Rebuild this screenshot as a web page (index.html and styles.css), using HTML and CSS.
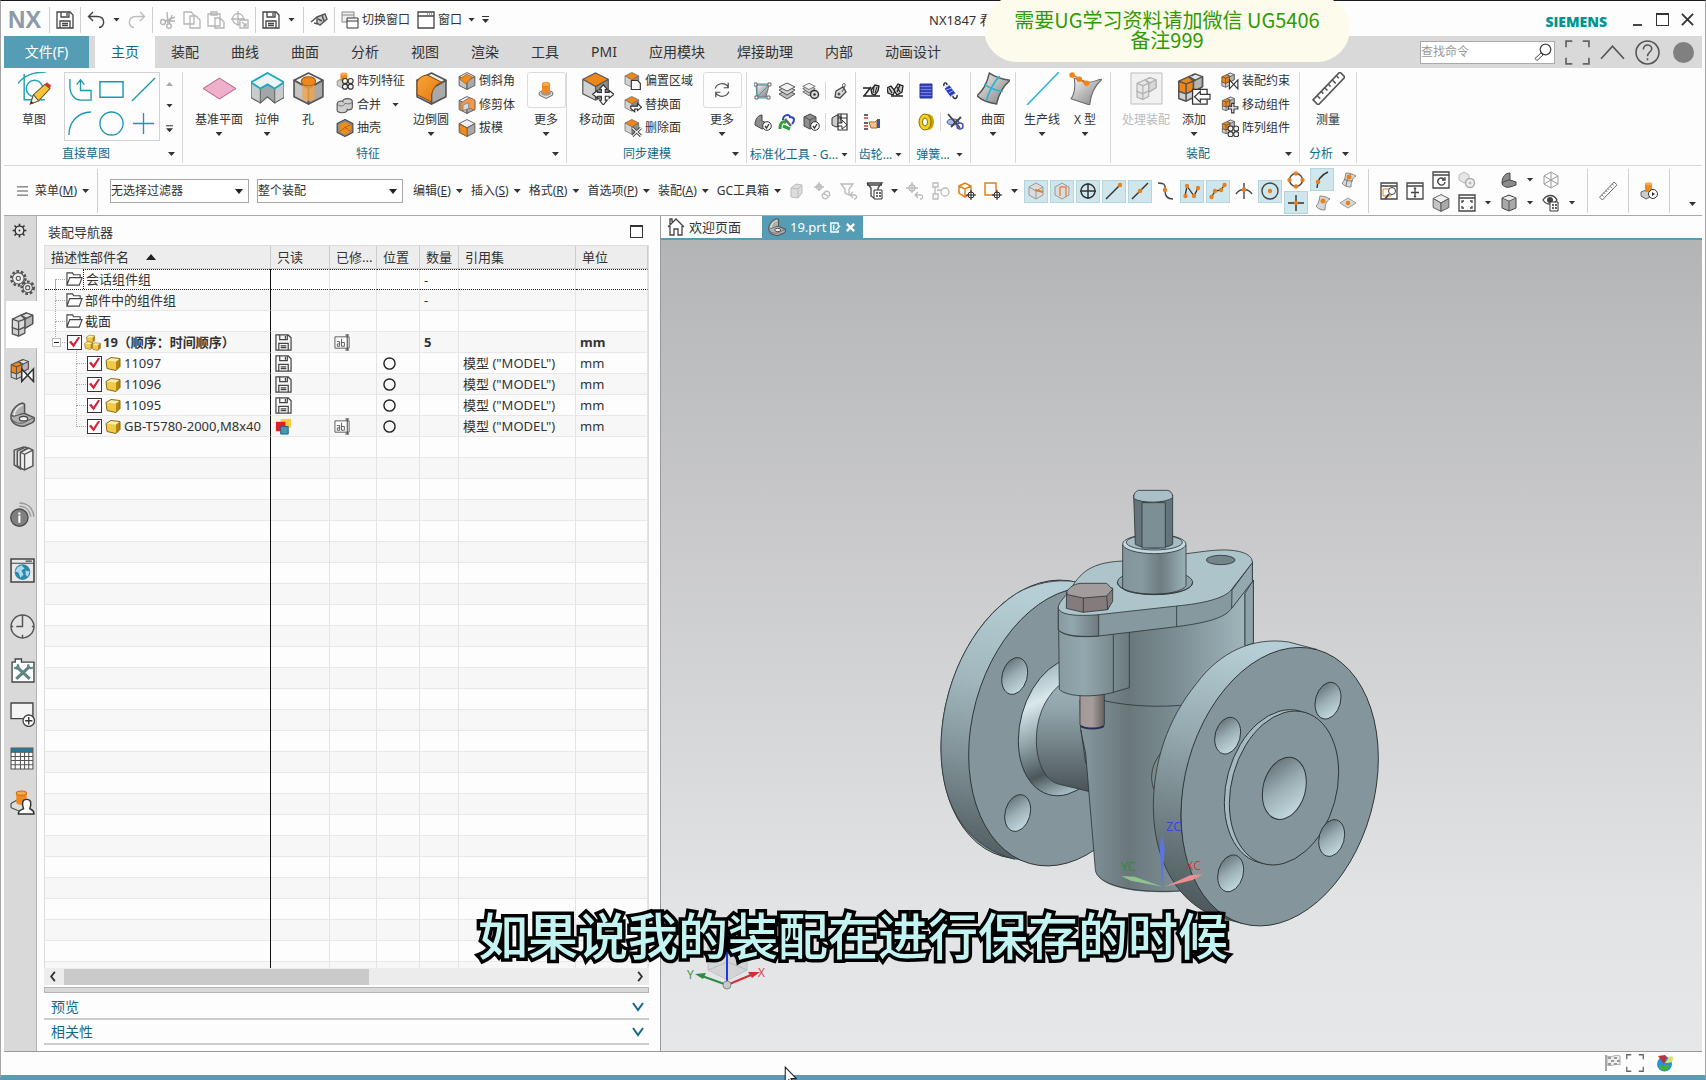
FILE: index.html
```
<!DOCTYPE html>
<html lang="zh-CN">
<head>
  <meta charset="UTF-8">
  <meta name="viewport" content="width=device-width, initial-scale=1.0">
  <title>NX1847</title>
  <link rel="stylesheet" href="styles.css">
</head>
<body>
  <!-- icon sprites -->
  <svg class="sprites" aria-hidden="true">
    <defs>
      <linearGradient id="gSteel" x1="0" y1="0" x2="1" y2="1"><stop offset="0" stop-color="#f2f2f2"/><stop offset="1" stop-color="#7d7d7d"/></linearGradient>
      <linearGradient id="gOrange" x1="0" y1="0" x2="1" y2="1"><stop offset="0" stop-color="#f9a63c"/><stop offset="1" stop-color="#e0760a"/></linearGradient>
    </defs>
    <symbol id="cube" viewBox="0 0 32 32">
      <g stroke="var(--s,#555)" stroke-width="var(--w,1.6)" stroke-linejoin="round">
        <path d="M16 1l14 7-14 8L2 8z" fill="var(--t,#f0f0f0)"/>
        <path d="M2 8l14 8v15L2 24z" fill="var(--l,#c4c4c4)"/>
        <path d="M30 8l-14 8v15l14-7z" fill="var(--r,#a9a9a9)"/>
      </g>
    </symbol>
    <symbol id="stack" viewBox="0 0 32 32">
      <g stroke="#555" stroke-width="1.700" stroke-linejoin="round">
        <path d="M14 4l7-3 8 3v11l-10 6-5-2z" fill="#e4e4e4"/>
        <path d="M29 4v11l-10 6V9z" fill="#b5b5b5"/>
        <path d="M3 19l8 3 8-3v8l-8 4-8-3z" fill="#cfcfcf"/>
        <path d="M3 9l11-5 5 5v10l-8 4-8-3z" fill="var(--t,#dcdcdc)"/>
        <path d="M3 9l8 3 8-3 2-1-7-4M11 12v19M21 1l-4 2" fill="none"/>
      </g>
    </symbol>
    <symbol id="save" viewBox="0 0 18 18"><path d="M1 1h13l3 3v13H1zM5 1v5h8V1M4 17v-7h10v7M6 12.500h6M6 14.500h6M11 2v3" fill="none" stroke="#444" stroke-width="1.300"/></symbol>
    <symbol id="undo" viewBox="0 0 18 18"><path d="M6 1L1.500 5.500 6 10M2 5.500h8c9 0 8 11 2 11" fill="none" stroke="currentColor" stroke-width="1.400"/></symbol>
    <symbol id="cut" viewBox="0 0 18 18"><g fill="none" stroke="#b5b5b5" stroke-width="1.400"><circle cx="4" cy="11" r="2.500"/><circle cx="10" cy="15" r="2.300"/><path d="M6 10l10-4M9 13L8 1M10 13l3-9M7 10l9 0"/></g></symbol>
    <symbol id="copy" viewBox="0 0 18 18"><path d="M1 1h7l3 3v9H1zM7 5h6l4 4v8H7z" fill="#fff" stroke="#b5b5b5" stroke-width="1.300"/></symbol>
    <symbol id="paste" viewBox="0 0 18 18"><path d="M1 3h12v12H1zM4 1h6v3H4zM8 7h5l4 4v6H8z" fill="#fff" stroke="#b5b5b5" stroke-width="1.300"/></symbol>
    <symbol id="repeat" viewBox="0 0 18 18"><g fill="none" stroke="#b5b5b5" stroke-width="1.300"><circle cx="7" cy="8" r="5.500"/><path d="M7 0v15M0 8h14"/><path d="M9 9h8v8H9z" fill="#fff"/><path d="M11 11l4 4m0-3v3h-3"/></g></symbol>
    <symbol id="eraser" viewBox="0 0 18 18"><path d="M7 6l8-3 2 5-7 6-3-2z" fill="#ccc" stroke="#555" stroke-width="1.400"/><path d="M1 11l6-5M4 12l4 1M12 4l2 6M8 8l4 2" stroke="#555" stroke-width="1.600" fill="none"/></symbol>
    <symbol id="switch" viewBox="0 0 18 18"><path d="M1 1h12v10H1zM1 4h12" fill="#eee" stroke="#888"/><path d="M6 7h11v10H6zM6 10h11" fill="#fff" stroke="#333"/></symbol>
    <symbol id="window" viewBox="0 0 18 18"><path d="M1 1h16v16H1zM1 5h16" fill="#fff" stroke="#444" stroke-width="1.300"/><path d="M10 3h5" stroke="#444" stroke-dasharray="1 1"/></symbol>

    <symbol id="sketch" viewBox="0 0 32 32"><g fill="none" stroke="#25a0b5" stroke-width="1.400"><path d="M0 11C6 3 16 0 27 0M6 2v25h20"/><circle cx="16" cy="16" r="8"/></g><path d="M12 31l3-9L26 12l5 4-11 12z" fill="#f5c33c" stroke="#6b5520"/><path d="M26 12l2-2 4 3-1 3z" fill="#d2343c"/><path d="M12 31l3-9 5 6z" fill="#fff3cf" stroke="#555"/><path d="M12 31l1-3 2 2z" fill="#333"/></symbol>
    <symbol id="profile" viewBox="0 0 26 26"><path d="M2 2v8c0 8 5 14 11 14h11V14H13V4M9 8l4-5 4 5" fill="none" stroke="#1d97b0" stroke-width="1.400"/></symbol>
    <symbol id="rect" viewBox="0 0 26 26"><path d="M1 5h24v16H1z" fill="none" stroke="#1d97b0" stroke-width="1.500"/></symbol>
    <symbol id="line" viewBox="0 0 26 26"><path d="M1 25L25 1" stroke="#1d97b0" stroke-width="1.400"/></symbol>
    <symbol id="arc" viewBox="0 0 26 26"><path d="M1 25C1 12 10 1 24 1" fill="none" stroke="#1d97b0" stroke-width="1.400"/></symbol>
    <symbol id="circle" viewBox="0 0 26 26"><circle cx="13" cy="13" r="12" fill="none" stroke="#1d97b0" stroke-width="1.400"/></symbol>
    <symbol id="plus" viewBox="0 0 26 26"><path d="M13 2v22M2 13h22" stroke="#1d97b0" stroke-width="1.400"/></symbol>

    <symbol id="plane" viewBox="0 0 32 32"><path d="M16 6l16 10-16 10L0 16z" fill="#efb0cb" stroke="#c0668f"/></symbol>
    <symbol id="extrude" viewBox="0 0 32 32"><path d="M0 10l16-9 16 9v15l-9 5-7-6-7 6-9-5z" fill="#c9cccd" stroke="#555"/><path d="M9 16l7-4 7 4v14l-7-6-7 6z" fill="#a3a6a8" stroke="#666"/><path d="M0 10l16-9 16 9-9 6-7-4-7 4z" fill="#eef3f4" stroke="#1fa7c4" stroke-width="1.800"/></symbol>
    <symbol id="hole" viewBox="0 0 32 32"><use href="#cube"/><path d="M10 12v13c0 4 12 4 12 0V12" fill="#f3a54a" opacity=".8"/><ellipse cx="16" cy="9" rx="7" ry="4.500" fill="#f0871a" stroke="#a5590b"/></symbol>
    <symbol id="blend" viewBox="0 0 32 32"><use href="#cube"/><path d="M2 22V10C3 6 8 3 12 3l14 7c-6 2-9 7-10 12v7z" fill="url(#gOrange)" stroke="#8a4c0c"/></symbol>
    <symbol id="more" viewBox="0 0 32 32"><path d="M4 20l12-6 12 6v5l-12 6-12-6z" fill="#ddd" stroke="#555" stroke-width="1.500"/><ellipse cx="16" cy="21" rx="9" ry="5" fill="#999"/><path d="M9 6v13c0 4 14 4 14 0V6z" fill="#f08a20"/><ellipse cx="16" cy="6" rx="7" ry="4" fill="#f9a94e" stroke="#c9700f"/></symbol>
    <symbol id="pattern" viewBox="0 0 32 32"><path d="M2 16l10-5 8 4v10l-8 4-10-5z" fill="#ccc" stroke="#666"/><path d="M8 3v13h12V3z" fill="#ef8a20"/><ellipse cx="14" cy="3.500" rx="6" ry="2.500" fill="#f9a94e"/><g fill="#f4f4f4" stroke="#333" stroke-width="2"><circle cx="16" cy="16" r="4.500"/><circle cx="26" cy="16" r="4.500"/><circle cx="16" cy="26" r="4.500"/><circle cx="26" cy="26" r="4.500"/></g></symbol>
    <symbol id="unite" viewBox="0 0 32 32"><path d="M2 14c0-5 8-6 10-4 0-7 17-7 17 0v10c0 5-8 5-9 4 0 8-18 7-18 1z" fill="#cfcfcf" stroke="#555" stroke-width="2"/><path d="M2 14c2 5 13 5 14-1 7 2 12 1 13-3" fill="none" stroke="#666" stroke-width="1.500"/></symbol>
    <symbol id="shell" viewBox="0 0 32 32"><path d="M16 1l14 7v16l-14 7L2 24V8z" fill="#8a8a8a" stroke="#444" stroke-width="2"/><path d="M16 5l10 5v12l-10 6-10-6V10z" fill="#f08c1e"/><path d="M16 15l10-5M16 15L6 22M16 15l10 7" stroke="#a75c08" stroke-width="1.500"/></symbol>
    <symbol id="trim" viewBox="0 0 32 32"><use href="#cube"/><path d="M5 12l16-9 9 4v18l-8-3-17 4z" fill="#ee9a55" stroke="#9a6231" stroke-width="1.500"/><path d="M9 16l10-4v10l-10 4z" fill="#d9d9d9" stroke="#666"/></symbol>
    <symbol id="chamfer" viewBox="0 0 32 32"><use href="#cube"/><path d="M2 12l14-8 10 5-12 12z" fill="#f08c1e" stroke="#8a4c0c"/></symbol>
    <symbol id="draft" viewBox="0 0 32 32"><use href="#cube"/><path d="M2 9l14 7v15L4 24z" fill="#f08c1e" stroke="#8a4c0c"/></symbol>
    <symbol id="cubeO" viewBox="0 0 32 32"><path d="M16 1l14 7-14 8L2 8z" fill="#ef8718"/><path d="M2 8l14 8v15L2 24z" fill="#d2d2d2"/><path d="M30 8l-14 8v15l14-7z" fill="#8c8c8c"/><path d="M16 1l14 7v16l-14 7L2 24V8zM2 8l14 8 14-8M16 16v15" fill="none" stroke="#555" stroke-width="1.300"/></symbol>
    <symbol id="moveface" viewBox="0 0 34 34"><use href="#cubeO" width="30" height="30"/><path d="M23 13l4 5h-2v3h4v-2l5 4-5 4v-2h-4v4h2l-4 5-4-5h2v-4h-4v2l-5-4 5-4v2h4v-3h-2z" fill="#fff" stroke="#333" stroke-width="1.200"/></symbol>
    <symbol id="offset" viewBox="0 0 32 32"><use href="#cubeO" width="28" height="28"/><path d="M13 15h11l5 5v11H13z" fill="#fff" stroke="#333" stroke-width="2"/></symbol>
    <symbol id="replace" viewBox="0 0 32 32"><use href="#cubeO" width="28" height="28"/><path d="M12 18h12v-5l7 7-7 6v-3H19v5l-7-6z" fill="#fff" stroke="#333" stroke-width="2"/></symbol>
    <symbol id="delface" viewBox="0 0 32 32"><use href="#cubeO" width="28" height="28"/><path d="M15 16l15 14M30 16L15 30" stroke="#333" stroke-width="5"/><path d="M15 16l15 14M30 16L15 30" stroke="#fff" stroke-width="2"/></symbol>
    <symbol id="cycle" viewBox="0 0 32 32"><path d="M4 13C7 3 22 2 27 11M27 3v9h-8M28 19c-3 10-18 11-23 2M5 29v-9h8" fill="none" stroke="#4b4b4b" stroke-width="2.200"/></symbol>

    <symbol id="stdA" viewBox="0 0 18 18"><path d="M2 3h13l-3 12H3z" fill="url(#gSteel)" stroke="#777"/><path d="M1 2h16M2 16L15 3M3 2v14h12" stroke="#3a9aa8" fill="none"/><path d="M0 1h3v3H0zM14 1h3v3h-3zM1 14h3v3H1zM13 14h3v3h-3z" fill="#fff" stroke="#666"/></symbol>
    <symbol id="layers" viewBox="0 0 18 18"><path d="M9 8l8 4-8 5-8-5z" fill="#bbb" stroke="#555"/><path d="M9 4l8 4-8 5-8-5z" fill="#d2d2d2" stroke="#555"/><path d="M9 1l8 4-8 4-8-4z" fill="#f2f2f2" stroke="#555"/></symbol>
    <symbol id="layerGear" viewBox="0 0 18 18"><use href="#layers" width="14" height="15"/><circle cx="12.500" cy="12.500" r="4" fill="#ddd" stroke="#333" stroke-width="1.500"/><circle cx="12.500" cy="12.500" r="1.300" fill="#333"/></symbol>
    <symbol id="tag" viewBox="0 0 18 18"><path d="M5 9l7-4 3 5-6 6-5-1z" fill="#ddd" stroke="#444" stroke-width="1.300"/><path d="M12 5c-2-4 3-5 2-1l-3 6" fill="none" stroke="#555"/><circle cx="8" cy="12" r="1.500" fill="#555"/></symbol>
    <symbol id="partOk" viewBox="0 0 18 18"><path d="M1 12C1 5 5 2 8 2v6l5 2v4l-5 2z" fill="#8d8d8d" stroke="#444"/><circle cx="13" cy="13" r="4.300" fill="#fff" stroke="#333"/><path d="M11 13l1.500 2 2.500-4" fill="none" stroke="#333" stroke-width="1.300"/></symbol>
    <symbol id="boxOk" viewBox="0 0 18 18"><path d="M2 4l6-3 6 3v9l-6 3-6-3z" fill="#8d8d8d" stroke="#444"/><path d="M2 4l6 3 6-3M8 7v9" stroke="#555" fill="none"/><circle cx="13" cy="13" r="4.300" fill="#fff" stroke="#333"/><path d="M11 13l1.500 2 2.500-4" fill="none" stroke="#333" stroke-width="1.300"/></symbol>
    <symbol id="springy" viewBox="0 0 18 18"><path d="M2 16c0-8 4-8 6-6M5 13l7 3" fill="none" stroke="#25a334" stroke-width="3"/><path d="M5 7c0-6 7-6 7-3 5 0 5 4 2 7" fill="none" stroke="#2b45c8" stroke-width="2"/><path d="M7 6l6 7" stroke="#666" stroke-width="2.500"/></symbol>
    <symbol id="export" viewBox="0 0 18 18"><path d="M1 5l5-3 4 2v8l-5 2-4-2z" fill="#ccc" stroke="#333"/><path d="M7 1h9v16H7zM7 5h9M10 1v6" fill="none" stroke="#333" stroke-width="1.200"/><path d="M7 10h4V7l5 5-5 4v-3H7z" fill="#fff" stroke="#333"/></symbol>
    <symbol id="gearA" viewBox="0 0 18 18"><path d="M0 14h17M1 14L8 5M0 6h8" stroke="#222" stroke-width="1.500"/><path d="M8 8l4-5 4 1-1 5-3 4-3-1z" fill="#ccc" stroke="#222" stroke-width="1.300"/><path d="M11 5l-1 6M14 5l-2 6" stroke="#222"/></symbol>
    <symbol id="gearB" viewBox="0 0 18 18"><path d="M0 6l4-2 4 5-2 4-5-2z" fill="#ccc" stroke="#222" stroke-width="1.300"/><path d="M7 8l4-6 5 2-1 6-5 3z" fill="#ccc" stroke="#222" stroke-width="1.300"/><path d="M2 6l3 5M10 5l3 5M13 3l-3 7M4 14h12" stroke="#222" stroke-width="1.300"/></symbol>
    <symbol id="listHand" viewBox="0 0 18 18"><path d="M1 2h4M1 10h4M1 16h4" stroke="#333" stroke-width="1.600"/><path d="M1 5h4M1 13h4" stroke="#d33" stroke-width="1.300"/><path d="M6 9h6l2-2v8H8z" fill="#f2c48b" stroke="#a26b2f"/><path d="M14 6h3v9h-3z" fill="#3554b8"/></symbol>
    <symbol id="coil" viewBox="0 0 18 18"><path d="M3 2h12v14H3z" fill="#7782e0" stroke="#26348f"/><path d="M3 3h12M3 6h12M3 9h12M3 12h12M3 15h12" stroke="#1f2fa8" stroke-width="1.500"/></symbol>
    <symbol id="coil2" viewBox="0 0 18 18"><path d="M6 5l6 8" stroke="#2a3bc0" stroke-width="6"/><path d="M4 5l5-2M5 8l6-2M8 11l5-3M10 14l5-3" stroke="#aab2f0"/><path d="M3 4c-1-4 3-4 3-1M12 14c0 4 5 3 4-1" stroke="#223" stroke-width="1.400" fill="none"/></symbol>
    <symbol id="disc" viewBox="0 0 18 18"><ellipse cx="11" cy="9" rx="6" ry="8" fill="#c9a200"/><ellipse cx="8" cy="9" rx="6" ry="8" fill="#f2d21c" stroke="#8a7000"/><ellipse cx="8" cy="9" rx="2.500" ry="4" fill="#fff" stroke="#8a7000"/></symbol>
    <symbol id="snip" viewBox="0 0 18 18"><ellipse cx="7" cy="9" rx="6" ry="3" fill="#aab4ee" stroke="#4552b8"/><path d="M2 1l12 14M15 4L5 14" stroke="#444" stroke-width="1.800"/><circle cx="14" cy="13" r="3" fill="none" stroke="#4552b8" stroke-width="1.500"/></symbol>

    <symbol id="surface" viewBox="0 0 32 32"><path d="M12 1c6 4 13 6 20 7-7 6-11 13-13 23C12 30 5 28 0 23 6 18 10 10 12 1z" fill="url(#gSteel)" stroke="#555" stroke-width="1.400"/><path d="M22 4C16 10 12 18 9 28M7 12c6 4 12 6 18 7" fill="none" stroke="#27b4d2" stroke-width="1.500"/></symbol>
    <symbol id="bigline" viewBox="0 0 32 32"><path d="M1 32L32 0" stroke="#27b4d2" stroke-width="1.500"/></symbol>
    <symbol id="xform" viewBox="0 0 32 32"><path d="M5 6l14 4c5 0 9-3 13-3-7 6-11 15-12 25L2 26C6 20 6 12 5 6z" fill="url(#gSteel)" stroke="#666"/><path d="M3 2l13 9" stroke="#e2761b" stroke-width="1.500"/><g fill="#ee8320"><circle cx="3" cy="3" r="2.700"/><circle cx="10" cy="7" r="2.700"/><circle cx="17" cy="11" r="2.700"/></g></symbol>
    <symbol id="procasm" viewBox="0 0 34 34"><path d="M1 1h32v32H1z" fill="#f1f1f1" stroke="#bdbdbd"/><use href="#stack" x="5" y="5" width="24" height="24" opacity=".4"/></symbol>
    <symbol id="addcomp" viewBox="0 0 34 34"><g class="o"><use href="#stack" x="-2" y="0" width="30" height="32"/></g><path d="M15 18h15v15H15z" fill="#fff" stroke="#333" stroke-width="1.300"/><path d="M33 23H23v-3l-6 5.500 6 5.500v-3h10z" fill="#fff" stroke="#333" stroke-width="1.200"/></symbol>
    <symbol id="constrain" viewBox="0 0 32 32"><g class="o"><use href="#stack" x="-1" width="27" height="29"/></g><path d="M15 14v16L30 14v16z" fill="#fff" stroke="#333" stroke-width="2"/></symbol>
    <symbol id="movecomp" viewBox="0 0 32 32"><g class="o"><use href="#stack" width="26" height="28"/></g><path d="M21 12v19M12 21h19" stroke="#333" stroke-width="6"/><path d="M21 14v15M14 21h15" stroke="#fff" stroke-width="2"/></symbol>
    <symbol id="patcomp" viewBox="0 0 32 32"><g class="o"><use href="#stack" width="26" height="28"/></g><g fill="#f4f4f4" stroke="#333" stroke-width="2"><circle cx="17" cy="17" r="4.500"/><circle cx="27" cy="17" r="4.500"/><circle cx="17" cy="27" r="4.500"/><circle cx="27" cy="27" r="4.500"/></g></symbol>
    <symbol id="ruler" viewBox="0 0 32 32"><path d="M1 27L27 0l5 5L6 32z" fill="#fff" stroke="#555" stroke-width="1.600"/><path d="M5 23l3 3M9 19l2 2M12 15l3 3M16 12l2 2M20 8l3 3M24 4l2 2" stroke="#555" stroke-width="1.500"/></symbol>

    <symbol id="ghost" viewBox="0 0 18 18"><g fill="#ddd" stroke="#bbb"><path d="M3 6l5-4 6 1v8l-4 5-7-1z"/><path d="M3 6l7 1 4-4M10 7v9" fill="none"/></g></symbol>
    <symbol id="ghost2" viewBox="0 0 18 18"><g fill="none" stroke="#bbb" stroke-width="1.300"><path d="M5 0v9M0 5h10"/><circle cx="5" cy="5" r="2.500"/><path d="M8 13l4-4 3 1 1 3-4 4-3-1zM9 11l5 3"/></g></symbol>
    <symbol id="filterU" viewBox="0 0 18 18"><path d="M1 2h12L9 7v6l-4-2V7zM11 13h3c4 0 3 4 0 4M13 10l-3 3 3 3" fill="none" stroke="#bbb" stroke-width="1.300"/></symbol>
    <symbol id="filter" viewBox="0 0 18 18"><path d="M1 1h15l-4 5v3M1 1l4 5v8l3 2M1 3h15" fill="none" stroke="#444" stroke-width="1.300"/><path d="M8 8h8v9H8z" fill="#fff" stroke="#333"/><path d="M10 11h2M10 14h2M13 11h2M13 14h2" stroke="#333" stroke-width="1.500"/></symbol>
    <symbol id="pickU" viewBox="0 0 18 18"><g fill="none" stroke="#bbb" stroke-width="1.300"><path d="M6 0v11M0 6h12"/><circle cx="6" cy="6" r="3"/><path d="M10 13h4c4 0 3 4 0 4M12 10l-3 3 3 3"/></g></symbol>
    <symbol id="treeIc" viewBox="0 0 18 18"><g fill="none" stroke="#bbb" stroke-width="1.300"><path d="M1 1h5v4H1zM1 12h5v5H1zM3 5v7M5 8h4"/><circle cx="13" cy="10" r="4"/></g></symbol>
    <symbol id="pickBody" viewBox="0 0 18 18"><path d="M1 4l6-3 6 3v7l-6 4-6-4zM1 4l6 3 6-3M7 7v8" fill="none" stroke="#e0801c" stroke-width="1.500"/><circle cx="13" cy="13" r="3" fill="#fff" stroke="#222"/><path d="M13 8v10M8 13h10" stroke="#222"/></symbol>
    <symbol id="pickRect" viewBox="0 0 18 18"><path d="M1 1h11v12H1z" fill="none" stroke="#e0801c" stroke-width="1.500"/><circle cx="13" cy="13" r="3" fill="#fff" stroke="#222"/><path d="M13 8v10M8 13h10" stroke="#222"/></symbol>
    <symbol id="bodyFace" viewBox="0 0 18 18"><path d="M9 1l7 4v8l-7 4-7-4V5z" fill="#dcdcdc" stroke="#999"/><path d="M2 5l7 4 7-4M9 9v8" fill="none" stroke="#999"/><path d="M8 8l8 2" stroke="#e0801c" stroke-width="2"/></symbol>
    <symbol id="bodyEdge" viewBox="0 0 18 18"><path d="M9 1l7 4v8l-7 4-7-4V5z" fill="#dcdcdc" stroke="#999"/><path d="M7 5h6v10M7 5v9" fill="none" stroke="#d98a54" stroke-width="1.500"/></symbol>
    <symbol id="target" viewBox="0 0 18 18"><circle cx="9" cy="9" r="7" fill="none" stroke="#333" stroke-width="1.500"/><path d="M9 1v6M9 11v6M1 9h6M11 9h6M7 9h4M9 7v4" stroke="#333" stroke-width="1.500"/></symbol>
    <symbol id="endpt" viewBox="0 0 18 18"><path d="M1 17L15 3" stroke="#333" stroke-width="1.500"/><circle cx="15" cy="3" r="2.200" fill="#e8801c"/></symbol>
    <symbol id="midpt" viewBox="0 0 18 18"><path d="M1 17L17 1" stroke="#333" stroke-width="1.500"/><circle cx="9" cy="9" r="2.300" fill="#e8801c"/></symbol>
    <symbol id="scurve" viewBox="0 0 18 18"><path d="M1 1c9 0 7 4 7 8s2 8 8 8" fill="none" stroke="#444" stroke-width="1.400"/><circle cx="8" cy="8" r="2.200" fill="#e8801c"/></symbol>
    <symbol id="poly" viewBox="0 0 18 18"><path d="M2 14L4 4l7 10 4-8" fill="none" stroke="#333" stroke-width="1.300"/><g fill="#e8801c"><circle cx="2.500" cy="14" r="2.200"/><circle cx="4" cy="4" r="2.200"/><circle cx="11" cy="14" r="2.200"/><circle cx="15" cy="6" r="2.200"/></g></symbol>
    <symbol id="spline" viewBox="0 0 18 18"><path d="M2 16l4-7 6-1 4-6" fill="none" stroke="#333" stroke-width="1.300"/><g fill="#e8801c"><circle cx="2.500" cy="15" r="2.200"/><circle cx="6" cy="9" r="2.200"/><circle cx="12" cy="8" r="2.200"/><circle cx="15.500" cy="3" r="2.200"/></g></symbol>
    <symbol id="cross" viewBox="0 0 18 18"><path d="M9 1v16M1 12c4-6 12-6 16 0" fill="none" stroke="#444" stroke-width="1.400"/><circle cx="9" cy="7.500" r="2.200" fill="#e8801c"/></symbol>
    <symbol id="center" viewBox="0 0 18 18"><circle cx="9" cy="9" r="8" fill="none" stroke="#444" stroke-width="1.400"/><circle cx="9" cy="9" r="2.200" fill="#e8801c"/></symbol>
    <symbol id="quad" viewBox="0 0 18 18"><circle cx="9" cy="9" r="6.500" fill="none" stroke="#444" stroke-width="1.400"/><g fill="#e8801c"><circle cx="9" cy="2.500" r="2.200"/><circle cx="9" cy="15.500" r="2.200"/><circle cx="2.500" cy="9" r="2.200"/><circle cx="15.500" cy="9" r="2.200"/></g></symbol>
    <symbol id="point" viewBox="0 0 18 18"><path d="M9 1v16M1 9h16" stroke="#333" stroke-width="1.400"/><circle cx="9" cy="9" r="2.200" fill="#e8801c"/></symbol>
    <symbol id="oncurve" viewBox="0 0 18 18"><path d="M4 17C4 10 8 4 15 1" fill="none" stroke="#333" stroke-width="1.400"/><circle cx="5" cy="11" r="2.300" fill="#e8801c"/></symbol>
    <symbol id="onsurf" viewBox="0 0 18 18"><path d="M7 2c3 0 7 1 10 3-4 2-5 6-5 11-4 0-7-1-9-4C6 10 6 6 7 2z" fill="#d8d8d8" stroke="#888"/><circle cx="10" cy="7" r="2.500" fill="#e8801c"/></symbol>
    <symbol id="gridsurf" viewBox="0 0 18 18"><path d="M7 2c3 0 7 1 10 3-4 2-5 6-5 11-4 0-7-1-9-4C6 10 6 6 7 2z" fill="#d8d8d8" stroke="#888"/><path d="M12 3C8 6 8 10 7 15M5 8c3 2 6 2 9 2" fill="none" stroke="#777"/><circle cx="10" cy="6" r="2.500" fill="#e8801c"/></symbol>
    <symbol id="onface" viewBox="0 0 18 18"><path d="M9 4l8 5-8 5-8-5z" fill="#d8d8d8" stroke="#999"/><circle cx="9" cy="9" r="2.300" fill="#e8801c"/></symbol>
    <symbol id="fitwin" viewBox="0 0 18 18"><path d="M1 1h16v16H1zM1 4h16" fill="#fff" stroke="#444" stroke-width="1.300"/><path d="M3 7h8v7H3z" fill="none" stroke="#e8801c"/><circle cx="12" cy="9" r="3.500" fill="#fff" stroke="#444"/><path d="M9 12l-4 5" stroke="#444" stroke-width="2"/></symbol>
    <symbol id="panwin" viewBox="0 0 18 18"><path d="M1 1h16v16H1zM1 4h16M9 6v9M5 10.500h8M8 7l1-1 1 1M8 14l1 1 1-1" fill="none" stroke="#444" stroke-width="1.300"/></symbol>
    <symbol id="rotwin" viewBox="0 0 18 18"><path d="M1 1h16v16H1zM1 4h16M12 8c-5-3-8 2-5 5 2 2 6 1 6-2M13 6v3h-3" fill="none" stroke="#444" stroke-width="1.300"/></symbol>
    <symbol id="fullwin" viewBox="0 0 18 18"><path d="M1 1h16v16H1zM1 4h16M4 9V7h2M12 7h2v2M4 12v2h2M12 14h2v-2" fill="none" stroke="#444" stroke-width="1.300"/></symbol>
    <symbol id="ghostgear" viewBox="0 0 18 18"><path d="M1 4l5-3 5 3v5l-5 3-5-3z" fill="#e6e6e6" stroke="#bbb"/><circle cx="12" cy="12" r="4.500" fill="#eee" stroke="#aaa" stroke-width="1.500"/><circle cx="12" cy="12" r="1.500" fill="#bbb"/></symbol>
    <symbol id="section" viewBox="0 0 18 18"><path d="M2 12C2 5 6 2 10 2v7l6 2v3l-6 2c-4 1-8-1-8-4z" fill="#8b8b8b" stroke="#444"/><path d="M2 12c3-2 6-3 8-3" fill="none" stroke="#444"/></symbol>
    <symbol id="shade" viewBox="0 0 18 18"><path d="M2 4l7-3 7 3v10l-7 3-7-3z" fill="#a9a9a9" stroke="#444"/><path d="M2 4l7 3 7-3M9 7v10" fill="none" stroke="#555"/><path d="M3 4l6-2 6 2-6 2.500z" fill="#eee"/></symbol>
    <symbol id="wire" viewBox="0 0 18 18"><path d="M9 1l7 4v8l-7 4-7-4V5zM2 5l7 4 7-4M9 9v8M9 1v8M2 13l7-4 7 4" fill="none" stroke="#999"/></symbol>
    <symbol id="eyelist" viewBox="0 0 18 18"><path d="M1 6c4-6 11-6 14 0-3 5-10 6-14 0z" fill="#fff" stroke="#444" stroke-width="1.300"/><circle cx="8" cy="6" r="3" fill="#444"/><path d="M8 8h8v9H8z" fill="#fff" stroke="#333"/><path d="M10 11h2M10 14h2M13 11h2M13 14h2" stroke="#333" stroke-width="1.500"/></symbol>
    <symbol id="play" viewBox="0 0 18 18"><path d="M1 10l5-2 6 3v3l-6 3-5-3z" fill="#ccc" stroke="#666"/><path d="M5 1h7v9H5z" fill="#ef8a20"/><ellipse cx="8.500" cy="1.800" rx="3.500" ry="1.500" fill="#f9a94e"/><circle cx="13" cy="12" r="4.500" fill="#fff" stroke="#333"/><path d="M12 10l3 2-3 2z" fill="#333"/></symbol>

    <symbol id="gear" viewBox="0 0 24 24"><path d="M12 1v4M12 19v4M1 12h4M19 12h4M4 4l3 3M17 17l3 3M20 4l-3 3M4 20l3-3" stroke="#333" stroke-width="2.500"/><circle cx="12" cy="12" r="7" fill="#e4e4e4" stroke="#333" stroke-width="2.200"/><circle cx="12" cy="12" r="1.500" fill="#333"/></symbol>
    <symbol id="gears" viewBox="0 0 24 24"><g fill="#ececec"><circle cx="8" cy="8" r="6.500" stroke="#555" stroke-width="3" stroke-dasharray="2.400 1.700"/><circle cx="8" cy="8" r="5.500" stroke="#555"/><circle cx="8" cy="8" r="2" stroke="#555"/><circle cx="17" cy="17" r="5.500" stroke="#555" stroke-width="3" stroke-dasharray="2.400 1.700"/><circle cx="17" cy="17" r="4.500" stroke="#555"/><circle cx="17" cy="17" r="2" stroke="#555"/></g></symbol>
    <symbol id="bracket" viewBox="0 0 24 24"><path d="M1 12C2 7 7 2 12 1l2 1v9l9 4c1 2 0 4-2 5l-7 3C8 24 2 21 1 16z" fill="#b0b0b0" stroke="#555" stroke-width="1.400"/><path d="M1 12c3 4 7-1 13-1" fill="#d8d8d8" stroke="#555" stroke-width="1.200"/><path d="M4 13C4 8 8 4 12 3" fill="none" stroke="#eee" stroke-width="1.200"/><ellipse cx="13" cy="16" rx="4" ry="2.200" fill="#f2f2f2" stroke="#444" stroke-width="1.200"/><path d="M1 16c3 4 8 5 12 4l10-5" fill="none" stroke="#666"/></symbol>
    <symbol id="books" viewBox="0 0 24 24"><path d="M4 4l9-3 2 1-5 3v17l-6-4z" fill="#d8d8d8" stroke="#555" stroke-width="1.400"/><path d="M7 5l8-4 2 1-5 3v17l-5-3z" fill="#e2e2e2" stroke="#555" stroke-width="1.400"/><path d="M10 6l8-4 4 2v15l-8 4-4-2z" fill="#f0f0f0" stroke="#555" stroke-width="1.400"/><path d="M10 6l4 2 8-4M14 8v15" fill="none" stroke="#555" stroke-width="1.300"/></symbol>
    <symbol id="info" viewBox="0 0 24 24"><circle cx="9" cy="15" r="8.300" fill="#7f7f7f" stroke="#4b4b4b" stroke-width="1.300"/><path d="M9 13v7M9 10v2" stroke="#fff" stroke-width="2"/><path d="M9 4c6 0 10 4 11 10M9 1c8 0 13 5 14 13" fill="none" stroke="#9b9b9b" stroke-width="1.500"/></symbol>
    <symbol id="web" viewBox="0 0 24 24"><path d="M1 1h22v22H1z" fill="#e9e9e9" stroke="#444" stroke-width="1.500"/><path d="M1 5h22M15 3h6" stroke="#444"/><circle cx="12" cy="13.500" r="7.500" fill="#2f86a8"/><path d="M7 9l4-2 3 3-3 2 2 4-3 3-2-5-3-1zM15 12l4 1-2 5-2-2z" fill="#a8dcec"/></symbol>
    <symbol id="clock" viewBox="0 0 24 24"><circle cx="12" cy="12" r="11" fill="#e4e4e4" stroke="#555" stroke-width="1.400"/><path d="M12 1v11H6M12 20v3M1 12h2M21 12h2" fill="none" stroke="#555" stroke-width="1.400"/></symbol>
    <symbol id="tools" viewBox="0 0 24 24"><path d="M2 4h3V1h6v3h12v19H2z" fill="#fff" stroke="#444" stroke-width="1.300"/><path d="M6 8l13 12M19 8L6 20" stroke="#5d8587" stroke-width="3"/><path d="M4 9c4 3 5-1 3-3M18 6c-2 3 1 5 4 3" fill="none" stroke="#5d8587" stroke-width="2"/></symbol>
    <symbol id="addwin" viewBox="0 0 24 24"><path d="M1 1h21v15H1z" fill="#f4f4f4" stroke="#444" stroke-width="1.300"/><circle cx="18" cy="18" r="5.500" fill="#fff" stroke="#444" stroke-width="1.300"/><path d="M18 14.500v7M14.500 18h7" stroke="#333" stroke-width="1.300"/></symbol>
    <symbol id="sheet" viewBox="0 0 24 24"><path d="M1 2h21v20H1z" fill="#fff"/><path d="M1 2h21v4H1z" fill="#23799a"/><path d="M1 2h21v20H1zM1 6h21M1 10h21M1 14h21M1 18h21M5 6v16M10 6v16M14 6v16M18 6v16" fill="none" stroke="#555"/></symbol>
    <symbol id="role" viewBox="0 0 24 24"><path d="M1 13l7-4 10 3v6l-7 3-10-4z" fill="#ddd" stroke="#444"/><path d="M6 3v9c0 3 10 3 10 0V3z" fill="#ef8a20"/><ellipse cx="11" cy="3" rx="5" ry="2" fill="#f9a94e" stroke="#c9700f"/><path d="M8 23c0-4 3-4 5-5-2-6-1-9 3-9s5 3 3 9c2 1 4 1 4 5z" fill="#fff" stroke="#333" stroke-width="1.400"/></symbol>

    <symbol id="folder" viewBox="0 0 18 16"><path d="M1 14V1h6l1 2h7v3M1 14L4 6h13l-3 8z" fill="#fff" stroke="#444" stroke-width="1.200"/></symbol>
    <symbol id="partY" viewBox="0 0 16 16"><path d="M1 5l5-3 9 1-4 3z" fill="#fdeeb0"/><path d="M1 5l10 1v9l-9-2z" fill="#f0cb4a"/><path d="M11 6l4-3v8l-4 4z" fill="#b8860b"/><path d="M1 5l5-3 9 1v8l-4 4-9-2z" fill="none" stroke="#8a6a12"/></symbol>
    <symbol id="asmY" viewBox="0 0 18 18"><use href="#partY" x="2" width="10" height="10"/><use href="#partY" y="7" width="10" height="10"/><use href="#partY" x="8" y="8" width="10" height="10"/></symbol>
    <symbol id="abI" viewBox="0 0 18 18"><path d="M1 3h15v12H1z" fill="#fff" stroke="#555"/><path d="M14 1v16M12 1h4M12 17h4" stroke="#333" fill="none"/><path d="M3 8h3v5H3.500v-2.500H6M8 5v8h3V9H8" fill="none" stroke="#555"/></symbol>
    <symbol id="clash" viewBox="0 0 18 18"><path d="M6 1h11v9H6z" fill="#f5cf3c"/><path d="M1 4h10v10H1z" fill="#e01f26"/><path d="M6 9h8v8H6z" fill="#3f9bbd" stroke="#1f6480"/></symbol>
    <symbol id="ring" viewBox="0 0 14 14"><circle cx="7" cy="7" r="6" fill="none" stroke="#222" stroke-width="1.500"/></symbol>
    <symbol id="home" viewBox="0 0 18 18"><path d="M1 9l8-8 8 8M3 8v9h4v-6h4v6h4V8M3 6V1h2v3" fill="#fff" stroke="#444" stroke-width="1.300"/></symbol>
    <symbol id="corners" viewBox="0 0 24 24"><path d="M1 7V1h6M17 1h6v6M23 17v6h-6M7 23H1v-6" fill="none" stroke="#666" stroke-width="1.700"/></symbol>
    <symbol id="chev" viewBox="0 0 24 24"><path d="M1 18L12 6l11 12" fill="none" stroke="#555" stroke-width="1.600"/></symbol>
    <symbol id="help" viewBox="0 0 24 24"><circle cx="12" cy="12" r="11" fill="none" stroke="#555" stroke-width="1.500"/><path d="M8 9c0-6 9-5 8 0-1 3-4 3-4 6.500M12 17.500v2" fill="none" stroke="#555" stroke-width="1.500"/></symbol>
    <symbol id="lens" viewBox="0 0 18 18"><circle cx="11.500" cy="6.500" r="5.300" fill="none" stroke="#444" stroke-width="1.300"/><path d="M7 10l2 2-6 5.500-2-2z" fill="#fff" stroke="#444"/></symbol>
    <symbol id="flag" viewBox="0 0 16 18"><path d="M1 1v16" stroke="#888" stroke-width="1.500"/><path d="M2 2c5 2 8-2 13 0v9c-5-2-8 2-13 0z" fill="#eee" stroke="#aaa"/><path d="M3 3h3v2H3zM9 3h3v2H9zM6 6h3v2H6zM12 6h3v2h-3zM3 9h3v2H3zM9 9h3v2H9z" fill="#999"/></symbol>
    <symbol id="earth" viewBox="0 0 18 18"><circle cx="8.500" cy="10" r="7.500" fill="#2694d8"/><path d="M3 13c2-3 6-1 7-2 3-1 4 1 2 4-3 3-7 2-9-2z" fill="#48ad3a"/><path d="M2 2l7-1 2 2-3 7z" fill="#b9333c"/><path d="M9 9l5-7 3 1c1 3-2 6-5 6z" fill="#dbe36a"/></symbol>
  </svg>

  <div class="app">
    <header class="titlebar">
      <span class="logo">NX</span>
      <span class="sep"></span>
      <button class="tool" aria-label="保存"><svg class="i"><use href="#save"/></svg></button>
      <span class="sep"></span>
      <button class="tool" aria-label="撤销"><svg class="i"><use href="#undo"/></svg></button>
      <span class="caret"></span>
      <button class="tool redo" aria-label="重做"><svg class="i flip"><use href="#undo"/></svg></button>
      <span class="sep"></span>
      <button class="tool" aria-label="剪切"><svg class="i"><use href="#cut"/></svg></button>
      <button class="tool" aria-label="复制"><svg class="i"><use href="#copy"/></svg></button>
      <button class="tool" aria-label="粘贴"><svg class="i"><use href="#paste"/></svg></button>
      <button class="tool" aria-label="重复"><svg class="i"><use href="#repeat"/></svg></button>
      <span class="sep"></span>
      <button class="tool" aria-label="保存全部"><svg class="i"><use href="#save"/></svg></button>
      <span class="caret"></span>
      <span class="sep"></span>
      <button class="tool" aria-label="触控"><svg class="i"><use href="#eraser"/></svg></button>
      <span class="sep"></span>
      <button class="tool text"><svg class="i"><use href="#switch"/></svg>切换窗口</button>
      <button class="tool text"><svg class="i"><use href="#window"/></svg>窗口<span class="caret"></span></button>
      <span class="caret bar"></span>
      <h1 class="doc-title">NX1847 看</h1>
      <span class="brand">SIEMENS</span>
      <button class="win min" aria-label="最小化"></button>
      <button class="win max" aria-label="最大化"></button>
      <button class="win close" aria-label="关闭"><svg viewBox="0 0 14 14"><path d="M1 1l12 12M13 1L1 13" stroke="#333" stroke-width="2"/></svg></button>
    </header>

    <nav class="tabs">
      <button class="tab file">文件(F)</button>
      <button class="tab active">主页</button>
      <button class="tab">装配</button>
      <button class="tab">曲线</button>
      <button class="tab">曲面</button>
      <button class="tab">分析</button>
      <button class="tab">视图</button>
      <button class="tab">渲染</button>
      <button class="tab">工具</button>
      <button class="tab">PMI</button>
      <button class="tab">应用模块</button>
      <button class="tab">焊接助理</button>
      <button class="tab">内部</button>
      <button class="tab">动画设计</button>
      <div class="search">
        <input type="text" placeholder="查找命令" aria-label="查找命令">
        <svg class="i"><use href="#lens"/></svg>
      </div>
      <button class="tool round" aria-label="全屏"><svg><use href="#corners"/></svg></button>
      <button class="tool round" aria-label="折叠"><svg><use href="#chev"/></svg></button>
      <button class="tool round" aria-label="帮助"><svg><use href="#help"/></svg></button>
      <span class="avatar"></span>
    </nav>

    <section class="ribbon">
      <div class="group g-sketch">
        <div class="body">
          <button class="big first"><svg><use href="#sketch"/></svg>草图</button>
          <div class="gallery">
            <svg><use href="#profile"/></svg><svg><use href="#rect"/></svg><svg><use href="#line"/></svg>
            <svg><use href="#arc"/></svg><svg><use href="#circle"/></svg><svg><use href="#plus"/></svg>
          </div>
          <div class="scroll-col"><span class="caret up"></span><span class="caret"></span><span class="caret bar"></span></div>
        </div>
        <div class="name"><span>直接草图</span><i class="caret"></i></div>
      </div>
      <div class="group g-feature">
        <div class="body">
          <button class="big"><svg><use href="#plane"/></svg>基准平面<i class="caret"></i></button>
          <button class="big mid"><svg><use href="#extrude"/></svg>拉伸<i class="caret"></i></button>
          <button class="big slim"><svg><use href="#hole"/></svg>孔</button>
          <div class="list indent">
            <button><svg class="i"><use href="#pattern"/></svg>阵列特征</button>
            <button><svg class="i"><use href="#unite"/></svg>合并<i class="caret"></i></button>
            <button><svg class="i"><use href="#shell"/></svg>抽壳</button>
          </div>
          <button class="big"><svg><use href="#blend"/></svg>边倒圆<i class="caret"></i></button>
          <div class="list">
            <button><svg class="i"><use href="#chamfer"/></svg>倒斜角</button>
            <button><svg class="i"><use href="#trim"/></svg>修剪体</button>
            <button><svg class="i"><use href="#draft"/></svg>拔模</button>
          </div>
          <button class="big more"><span><svg><use href="#more"/></svg></span>更多<i class="caret"></i></button>
        </div>
        <div class="name"><span>特征</span><i class="caret"></i></div>
      </div>
      <div class="group g-sync">
        <div class="body">
          <button class="big"><svg><use href="#moveface"/></svg>移动面</button>
          <div class="list">
            <button><svg class="i"><use href="#offset"/></svg>偏置区域</button>
            <button><svg class="i"><use href="#replace"/></svg>替换面</button>
            <button><svg class="i"><use href="#delface"/></svg>删除面</button>
          </div>
          <button class="big more"><span><svg><use href="#cycle"/></svg></span>更多<i class="caret"></i></button>
        </div>
        <div class="name"><span>同步建模</span><i class="caret"></i></div>
      </div>
      <div class="group g-std">
        <div class="body rows">
          <div class="cells"><svg class="i"><use href="#stdA"/></svg><svg class="i"><use href="#layers"/></svg><svg class="i"><use href="#layerGear"/></svg><span class="vr"></span><svg class="i"><use href="#tag"/></svg></div>
          <div class="cells"><svg class="i"><use href="#partOk"/></svg><svg class="i"><use href="#springy"/></svg><svg class="i"><use href="#boxOk"/></svg><span class="vr"></span><svg class="i"><use href="#export"/></svg></div>
        </div>
        <div class="name"><span>标准化工具 - G...</span><i class="caret"></i></div>
      </div>
      <div class="group g-gear">
        <div class="body rows">
          <div class="cells"><svg class="i"><use href="#gearA"/></svg><svg class="i"><use href="#gearB"/></svg></div>
          <div class="cells"><svg class="i"><use href="#listHand"/></svg></div>
        </div>
        <div class="name"><span>齿轮...</span><i class="caret"></i></div>
      </div>
      <div class="group g-spring">
        <div class="body rows">
          <div class="cells"><svg class="i"><use href="#coil"/></svg><svg class="i"><use href="#coil2"/></svg></div>
          <div class="cells"><svg class="i"><use href="#disc"/></svg><span class="vr"></span><svg class="i"><use href="#snip"/></svg></div>
        </div>
        <div class="name"><span>弹簧...</span><i class="caret"></i></div>
      </div>
      <div class="group g-surface">
        <div class="body"><button class="big mid"><svg><use href="#surface"/></svg>曲面<i class="caret"></i></button></div>
      </div>
      <div class="group g-line">
        <div class="body">
          <button class="big"><svg><use href="#bigline"/></svg>生产线<i class="caret"></i></button>
          <button class="big slim"><svg><use href="#xform"/></svg>X 型<i class="caret"></i></button>
        </div>
      </div>
      <div class="group g-asm">
        <div class="body">
          <button class="big" disabled><svg><use href="#procasm"/></svg>处理装配</button>
          <button class="big mid"><svg><use href="#addcomp"/></svg>添加<i class="caret"></i></button>
          <div class="list">
            <button><svg class="i"><use href="#constrain"/></svg>装配约束</button>
            <button><svg class="i"><use href="#movecomp"/></svg>移动组件</button>
            <button><svg class="i"><use href="#patcomp"/></svg>阵列组件</button>
          </div>
        </div>
        <div class="name"><span>装配</span><i class="caret"></i></div>
      </div>
      <div class="group g-measure">
        <div class="body"><button class="big first"><svg><use href="#ruler"/></svg>测量</button></div>
        <div class="name"><span>分析</span><i class="caret"></i></div>
      </div>
      <div class="ribbon-end"><i class="caret"></i></div>
    </section>

    <section class="toolbar">
      <button class="menu main"><svg class="burger" viewBox="0 0 12 12"><path d="M0 1.500h12M0 6h12M0 10.500h12" stroke="#444"/></svg>菜单(<u>M</u>)<i class="caret"></i></button>
      <span class="sep tall"></span>
      <div class="select s1"><select aria-label="选择过滤器"><option>无选择过滤器</option></select></div>
      <div class="select s2"><select aria-label="选择范围"><option>整个装配</option></select></div>
      <div class="menus">
        <button class="menu">编辑(<u>E</u>)<i class="caret"></i></button>
        <button class="menu">插入(<u>S</u>)<i class="caret"></i></button>
        <button class="menu">格式(<u>R</u>)<i class="caret"></i></button>
        <button class="menu">首选项(<u>P</u>)<i class="caret"></i></button>
        <button class="menu">装配(<u>A</u>)<i class="caret"></i></button>
        <button class="menu">GC工具箱<i class="caret"></i></button>
      </div>
      <div class="strip">
        <span class="slot"><svg class="i"><use href="#ghost"/></svg></span>
        <span class="slot"><svg class="i"><use href="#ghost2"/></svg></span>
        <span class="slot"><svg class="i"><use href="#filterU"/></svg></span>
        <span class="slot"><svg class="i"><use href="#filter"/></svg></span>
        <i class="caret"></i>
        <span class="slot"><svg class="i"><use href="#pickU"/></svg></span>
        <span class="slot"><svg class="i"><use href="#treeIc"/></svg></span>
        <span class="slot"><svg class="i"><use href="#pickBody"/></svg></span>
        <span class="slot"><svg class="i"><use href="#pickRect"/></svg></span>
        <i class="caret wide"></i>
        <span class="slot on"><svg class="i"><use href="#bodyFace"/></svg></span>
        <span class="slot on"><svg class="i"><use href="#bodyEdge"/></svg></span>
        <span class="slot on"><svg class="i"><use href="#target"/></svg></span>
        <span class="slot on"><svg class="i"><use href="#endpt"/></svg></span>
        <span class="slot on"><svg class="i"><use href="#midpt"/></svg></span>
        <span class="slot"><svg class="i"><use href="#scurve"/></svg></span>
        <span class="slot on"><svg class="i"><use href="#poly"/></svg></span>
        <span class="slot on"><svg class="i"><use href="#spline"/></svg></span>
        <span class="slot"><svg class="i"><use href="#cross"/></svg></span>
        <span class="slot on"><svg class="i"><use href="#center"/></svg></span>
        <div class="pair"><span class="slot"><svg class="i"><use href="#quad"/></svg></span><span class="slot on"><svg class="i"><use href="#point"/></svg></span></div>
        <div class="pair"><span class="slot on"><svg class="i"><use href="#oncurve"/></svg></span><span class="slot"><svg class="i"><use href="#onsurf"/></svg></span></div>
        <div class="pair"><span class="slot"><svg class="i"><use href="#gridsurf"/></svg></span><span class="slot"><svg class="i"><use href="#onface"/></svg></span></div>
        <span class="sep tall"></span>
        <span class="slot"><svg class="i"><use href="#fitwin"/></svg></span>
        <span class="slot"><svg class="i"><use href="#panwin"/></svg></span>
        <div class="pair"><span class="slot"><svg class="i"><use href="#rotwin"/></svg></span><span class="slot"><svg class="i"><use href="#cube"/></svg></span></div>
        <div class="pair"><span class="slot"><svg class="i"><use href="#ghostgear"/></svg></span><span class="slot"><svg class="i"><use href="#fullwin"/></svg></span></div>
        <div class="pair carets"><span></span><i class="caret"></i></div>
        <div class="pair"><span class="slot"><svg class="i"><use href="#section"/></svg></span><span class="slot"><svg class="i"><use href="#shade"/></svg></span></div>
        <div class="pair carets"><i class="caret"></i><i class="caret"></i></div>
        <div class="pair"><span class="slot"><svg class="i"><use href="#wire"/></svg></span><span class="slot"><svg class="i"><use href="#eyelist"/></svg></span></div>
        <div class="pair carets"><span></span><i class="caret"></i></div>
        <span class="sep tall"></span>
        <span class="slot"><svg class="i"><use href="#ruler"/></svg></span>
        <span class="sep tall"></span>
        <span class="slot"><svg class="i"><use href="#play"/></svg></span>
        <span class="sep tall"></span>
      </div>
      <i class="caret last"></i>
    </section>

    <main class="work">
      <aside class="rail">
        <button class="gear-btn" aria-label="设置"><svg><use href="#gear"/></svg></button>
        <button class="first" aria-label="特性"><svg><use href="#gears"/></svg></button>
        <button class="active" aria-label="装配导航器"><svg><use href="#stack"/></svg></button>
        <button aria-label="约束导航器"><svg><use href="#constrain"/></svg></button>
        <button aria-label="部件导航器"><svg><use href="#bracket"/></svg></button>
        <button aria-label="重用库"><svg><use href="#books"/></svg></button>
        <button class="gap" aria-label="HD3D"><svg><use href="#info"/></svg></button>
        <button class="gap" aria-label="浏览器"><svg><use href="#web"/></svg></button>
        <button class="gap" aria-label="历史"><svg><use href="#clock"/></svg></button>
        <button aria-label="加工向导"><svg><use href="#tools"/></svg></button>
        <button aria-label="添加资源"><svg><use href="#addwin"/></svg></button>
        <button aria-label="表格"><svg><use href="#sheet"/></svg></button>
        <button aria-label="角色"><svg><use href="#role"/></svg></button>
      </aside>

      <section class="navigator">
        <div class="nav-head"><h2>装配导航器</h2><button class="win max" aria-label="最大化面板"></button></div>
        <div class="grid">
          <table>
            <colgroup><col class="c1"><col class="c2"><col class="c3"><col class="c4"><col class="c5"><col class="c6"><col></colgroup>
            <thead>
              <tr><th>描述性部件名<span class="asc"></span></th><th>只读</th><th>已修...</th><th>位置</th><th>数量</th><th>引用集</th><th>单位</th></tr>
            </thead>
            <tbody>
              <tr class="focus"><td><div class="node l1"><svg class="i"><use href="#folder"/></svg><span class="boxed">会话组件组</span></div></td><td></td><td></td><td></td><td>-</td><td></td><td></td></tr>
              <tr><td><div class="node l1"><svg class="i"><use href="#folder"/></svg><span>部件中的组件组</span></div></td><td></td><td></td><td></td><td>-</td><td></td><td></td></tr>
              <tr><td><div class="node l1"><svg class="i"><use href="#folder"/></svg><span>截面</span></div></td><td></td><td></td><td></td><td></td><td></td><td></td></tr>
              <tr class="root"><td><div class="node l0"><b class="minus"></b><input type="checkbox" checked aria-label="19"><svg class="i"><use href="#asmY"/></svg><span>19（顺序：时间顺序）</span></div></td><td><svg class="i"><use href="#save"/></svg></td><td><svg class="i"><use href="#abI"/></svg></td><td></td><td>5</td><td></td><td>mm</td></tr>
              <tr><td><div class="node l2"><input type="checkbox" checked aria-label="11097"><svg class="i"><use href="#partY"/></svg><span>11097</span></div></td><td><svg class="i"><use href="#save"/></svg></td><td></td><td><svg class="ring"><use href="#ring"/></svg></td><td></td><td>模型 ("MODEL")</td><td>mm</td></tr>
              <tr><td><div class="node l2"><input type="checkbox" checked aria-label="11096"><svg class="i"><use href="#partY"/></svg><span>11096</span></div></td><td><svg class="i"><use href="#save"/></svg></td><td></td><td><svg class="ring"><use href="#ring"/></svg></td><td></td><td>模型 ("MODEL")</td><td>mm</td></tr>
              <tr><td><div class="node l2"><input type="checkbox" checked aria-label="11095"><svg class="i"><use href="#partY"/></svg><span>11095</span></div></td><td><svg class="i"><use href="#save"/></svg></td><td></td><td><svg class="ring"><use href="#ring"/></svg></td><td></td><td>模型 ("MODEL")</td><td>mm</td></tr>
              <tr><td><div class="node l2"><input type="checkbox" checked aria-label="GB-T5780-2000,M8x40"><svg class="i"><use href="#partY"/></svg><span>GB-T5780-2000,M8x40</span></div></td><td><svg class="i"><use href="#clash"/></svg></td><td><svg class="i"><use href="#abI"/></svg></td><td><svg class="ring"><use href="#ring"/></svg></td><td></td><td>模型 ("MODEL")</td><td>mm</td></tr>
              <tr class="filler"><td></td><td></td><td></td><td></td><td></td><td></td><td></td></tr>
            </tbody>
          </table>
        </div>
        <div class="hscroll">
          <svg viewBox="0 0 8 12"><path d="M6 1L2 6l4 5" fill="none" stroke="#333" stroke-width="2"/></svg>
          <div class="track"><div class="thumb"></div></div>
          <svg viewBox="0 0 8 12"><path d="M2 1l4 5-4 5" fill="none" stroke="#333" stroke-width="2"/></svg>
        </div>
        <div class="splitter"></div>
        <button class="fold">预览<svg viewBox="0 0 12 10"><path d="M1 1l5 7 5-7" fill="none" stroke="#136a87" stroke-width="2"/></svg></button>
        <button class="fold">相关性<svg viewBox="0 0 12 10"><path d="M1 1l5 7 5-7" fill="none" stroke="#136a87" stroke-width="2"/></svg></button>
      </section>

      <section class="view">
        <div class="doc-tabs">
          <button class="doc"><svg class="i"><use href="#home"/></svg>欢迎页面</button>
          <button class="doc current"><svg class="i"><use href="#bracket"/></svg>19.prt
            <svg class="mini" viewBox="0 0 12 12"><path d="M9 1H1v10h8V9M9 1v3M11 4L6 9M4 3v6" fill="none" stroke="#fff" stroke-width="1.600"/></svg>
            <svg class="mini" viewBox="0 0 12 12"><path d="M2 2l8 8M10 2l-8 8" stroke="#fff" stroke-width="2.500"/></svg>
          </button>
        </div>
        <div class="canvas">
          <svg class="model" viewBox="0 0 1440 1440">
            <defs>
              <linearGradient id="rim" gradientUnits="userSpaceOnUse" x1="300" y1="380" x2="120" y2="1150"><stop offset="0" stop-color="#b5cdd4"/><stop offset=".35" stop-color="#a1b7bd"/><stop offset=".65" stop-color="#7f9196"/><stop offset="1" stop-color="#4f5b5f"/></linearGradient>
              <linearGradient id="rim2" gradientUnits="userSpaceOnUse" x1="980" y1="540" x2="800" y2="1330"><stop offset="0" stop-color="#b5cdd4"/><stop offset=".35" stop-color="#95a9af"/><stop offset=".65" stop-color="#738388"/><stop offset="1" stop-color="#4a5558"/></linearGradient>
              <linearGradient id="bore" x1=".3" y1="0" x2=".6" y2="1"><stop offset="0" stop-color="#66757a"/><stop offset=".45" stop-color="#98abb1"/><stop offset="1" stop-color="#c3d9df"/></linearGradient>
              <linearGradient id="body" gradientUnits="userSpaceOnUse" x1="480" y1="0" x2="1000" y2="0"><stop offset="0" stop-color="#8599a0"/><stop offset=".28" stop-color="#69777b"/><stop offset=".6" stop-color="#7f9297"/><stop offset="1" stop-color="#a4bbc1"/></linearGradient>
              <linearGradient id="boss" x1="0" y1="0" x2="1" y2="0"><stop offset="0" stop-color="#879aa0"/><stop offset=".35" stop-color="#93a8ae"/><stop offset="1" stop-color="#6c7a7e"/></linearGradient>
              <linearGradient id="pipe" x1="0" y1="0" x2="0" y2="1"><stop offset="0" stop-color="#9fb5bb"/><stop offset=".3" stop-color="#93a7ad"/><stop offset=".7" stop-color="#6a787c"/><stop offset="1" stop-color="#495356"/></linearGradient>
              <linearGradient id="fillet" x1=".2" y1="0" x2=".3" y2="1"><stop offset="0" stop-color="#9fb6bc"/><stop offset=".25" stop-color="#d9e8ec"/><stop offset=".55" stop-color="#8b9ea3"/><stop offset=".8" stop-color="#4c575a"/><stop offset="1" stop-color="#a3b9bf"/></linearGradient>
              <linearGradient id="stem" x1="0" y1="0" x2="1" y2="0"><stop offset="0" stop-color="#82959b"/><stop offset=".3" stop-color="#879aa0"/><stop offset=".6" stop-color="#6d7c80"/><stop offset="1" stop-color="#9bb1b7"/></linearGradient>
              <linearGradient id="shaft" x1="0" y1="0" x2="1" y2="0"><stop offset="0" stop-color="#a39a98"/><stop offset=".5" stop-color="#a79e9c"/><stop offset="1" stop-color="#665f5f"/></linearGradient>
            </defs>
            <g class="edge">
              <!-- left flange, all rings share one tilted circle -->
              <circle r="1" transform="matrix(296 -85 0 409 359 748)" fill="#8fa4aa"/>
              <path d="M470 336C410 325 340 340 290 370 150 460 63 650 63 835c0 190 90 300 222 333l100 20L146 860 450 360z" fill="url(#rim)" stroke="none"/>
              <path d="M470 336C410 325 340 340 290 370 150 460 63 650 63 835c0 190 90 300 222 333" fill="none"/>
              <circle r="1" transform="matrix(296 -85 0 409 442 770)" fill="#84969b"/>
              <circle r="1" transform="matrix(39 -11 0 54 284 618)" fill="url(#bore)"/>
              <circle r="1" transform="matrix(39 -11 0 54 293 1029)" fill="url(#bore)"/>
              <circle r="1" transform="matrix(147 -42 0 203 442 770)" fill="url(#fillet)"/>
              <path d="M415 648C370 690 348 750 349 815c2 70 30 120 70 128l90 22V600z" fill="url(#pipe)"/>
              <!-- valve body -->
              <path d="M628 480L935 400l65-70V520L900 700 820 800v460c-150 20-292-5-294-62L497 850l-17-70V690z" fill="url(#body)" stroke="none"/>
              <path d="M480 690l2 90 15 70 29 348c2 45 110 75 264 64M552 692c80 18 170 20 240 13M1000 330v190M975 370v155M483 780l14 100" fill="none"/>
              <path d="M975 370l25-40v190l-25 8z" fill="#8ea3a9"/>
              <!-- boss and bolt shaft -->
              <path d="M480 670h73v95c-8 14-65 14-73 0z" fill="url(#shaft)"/>
              <path d="M482 768c15 10 55 10 70 0" stroke="#30285a" stroke-width="6" fill="none"/>
              <path d="M416 480l2 178c20 22 100 26 162 9l48-14V480z" fill="url(#boss)"/>
              <path d="M580 490v177" fill="none"/>
              <!-- cover plate -->
              <path d="M415 412v68c20 22 80 22 121 18l234-28c110-14 150-32 165-56l62-82v-57L935 360z" fill="#86999f"/>
              <path d="M936 360l61-82v57l-62 80z" fill="#94a9af"/>
              <path d="M415 412l0 68c20 20 80 21 121 18v-64z" fill="url(#boss)"/>
              <path d="M415 412c0-12 18-30 30-45 30-45 50-90 165-94l190-22c60-8 90-12 120-11 45 2 77 13 77 38l-62 80c-20 28-90 43-165 50l-234 26c-70 6-121 0-121-22z" fill="#adc4cb"/>
              <path d="M770 408v62" fill="none"/>
              <ellipse cx="902" cy="270" rx="43" ry="14" fill="#74858a"/>
              <ellipse cx="705" cy="337" rx="113" ry="37" fill="#8fa4aa"/>
              <!-- stem -->
              <path d="M608 225v130c20 24 170 26 190-8V225z" fill="url(#stem)"/>
              <path d="M592 337c4 46 222 50 226 0" fill="none"/>
              <ellipse cx="703" cy="222" rx="95" ry="29" fill="#c3d9df"/>
              <ellipse cx="703" cy="217" rx="84" ry="23" fill="#a5bcc2"/>
              <path d="M641 75l5 148c20 14 90 16 112 0V75z" fill="#65747a"/>
              <path d="M666 98v136h70V98z" fill="#7c8f95"/>
              <path d="M641 85c0-14 4-20 14-24h88c12 3 15 12 15 22-20 17-97 18-117 2z" fill="#a9c0c6"/>
              <!-- bolt head -->
              <path d="M440 365l-1 50 50 12 74-8 15-25v-40z" fill="#847c7c"/>
              <path d="M440 365c10-14 20-22 40-25h80l18 18-18 20-70 6-48-10z" fill="#a39c9c"/>
              <path d="M490 384v42M560 378l3 41" fill="none"/>
              <!-- right flange -->
              <path d="M730 840c-45 50-40 100-22 130" fill="#7a8b90"/>
              <path d="M1189 538l-83-22C1000 500 900 545 830 640 740 750 700 880 700 1010c0 170 80 290 186 329l83 22C850 1300 783 1180 783 1035 790 800 960 540 1189 538z" fill="url(#rim2)"/>
              <circle r="1" transform="matrix(296 -85 0 409 1079 950)" fill="#84969b"/>
              <circle r="1" transform="matrix(164 -47 0 226 1077 950)" fill="#a5bbc1"/>
              <circle r="1" transform="matrix(164 -47 0 226 1092 954)" fill="#84969b"/>
              <circle r="1" transform="matrix(66 -19 0 91 1093 955)" fill="url(#bore)"/>
              <circle r="1" transform="matrix(39 -11 0 54 923 797)" fill="url(#bore)"/>
              <circle r="1" transform="matrix(39 -11 0 54 1224 692)" fill="url(#bore)"/>
              <circle r="1" transform="matrix(39 -11 0 54 1235 1104)" fill="url(#bore)"/>
              <circle r="1" transform="matrix(39 -11 0 54 932 1210)" fill="url(#bore)"/>
            </g>
            <!-- work coordinate system -->
            <path d="M727 1250l-8-115 6-45 9 45z" fill="#5a75e0"/>
            <path d="M727 1250l-95-18-28-14 40 2z" fill="#8fc48c"/>
            <path d="M735 1250l75-34 40-3-32 17z" fill="#ec8f92"/>
            <text x="738" y="1082" fill="#2f49e0">ZC</text>
            <text x="798" y="1199" fill="#d23a3a">XC</text>
            <text x="602" y="1202" fill="#2f8a3a">YC</text>
          </svg>
          <svg class="triad" viewBox="0 0 90 80">
            <path d="M22 10l20-8 19 8v32l-19 10-20-10z" fill="#d3d4d6" stroke="#c0c0c2"/>
            <path d="M22 42l20-8 19 8" fill="none" stroke="#bbb"/>
            <path d="M41 57V0" stroke="#2038e0" stroke-width="2"/>
            <path d="M41 57L16 48" stroke="#2e8a3e" stroke-width="2"/><path d="M9 46l11-1-3 6z" fill="#2e8a3e"/>
            <path d="M41 57l24-10" stroke="#d0303a" stroke-width="2"/><path d="M74 44l-12 0 4 6z" fill="#d0303a"/>
            <circle cx="41" cy="57" r="4" fill="#c9c9c9" stroke="#888"/>
            <text x="1" y="51" fill="#3d8f3d">Y</text>
            <text x="72" y="49" fill="#d0404a">X</text>
          </svg>
        </div>
      </section>
    </main>

    <footer class="status">
      <svg class="i"><use href="#flag"/></svg>
      <svg class="i"><use href="#corners"/></svg>
      <svg class="i globe"><use href="#earth"/></svg>
    </footer>
  </div>

  <div class="notice">需要UG学习资料请加微信 UG5406<br>备注999</div>
  <p class="caption">如果说我的装配在进行保存的时候</p>
  <svg class="cursor" viewBox="0 0 12 19"><path d="M1 1v15l3.500-3 3 6 2-1-3-6h5z" fill="#fff" stroke="#222"/></svg>
</body>
</html>
```
FILE: styles.css
```
* {
  box-sizing: border-box;
}
body {
  margin: 0;
  height: 100vh;
  overflow: hidden;
  position: relative;
  font-family: "Noto Sans", "Noto Sans CJK SC", sans-serif;
  font-size: 12px;
  line-height: 16px;
  color: #333;
  background: #fdfdfd;
}
button {
  font: inherit;
  color: inherit;
  background: none;
  border: none;
  padding: 0;
  margin: 0;
  white-space: nowrap;
}
svg {
  flex: none;
  display: block;
}
.sprites {
  position: absolute;
  width: 0;
  height: 0;
}
.i {
  width: 18px;
  height: 18px;
}
.o {
  --t: #ef8718;
}
.app {
  height: 100vh;
  display: flex;
  flex-direction: column;
  border-top: 1px solid #1c181c;
  border-left: 1px solid #a5a5a5;
  border-right: 1px solid #a5a5a5;
  border-bottom: 5px solid #549db5;
  padding: 0 3px;
}
.caret {
  flex: none;
  width: 7px;
  height: 4px;
  background: #333;
  clip-path: polygon(0 0, 100% 0, 50% 100%);
}
.caret.up {
  background: #aaa;
  clip-path: polygon(50% 0, 100% 100%, 0 100%);
}
.caret.bar {
  height: 7px;
  clip-path: polygon(0 0, 100% 0, 100% 1px, 0 1px, 0 3px, 100% 3px, 50% 100%, 0 3px);
}
.sep {
  flex: none;
  width: 1px;
  height: 26px;
  background: #d0d0d0;
}
.sep.tall {
  height: 44px;
}

/* title bar */
.titlebar {
  flex: none;
  height: 35px;
  display: flex;
  align-items: center;
  gap: 6px;
  padding: 2px 8px 0 4px;
}
.logo {
  font: bold 24px "Liberation Sans", sans-serif;
  color: #8b9ba8;
  width: 35px;
}
.tool {
  display: flex;
  align-items: center;
  color: #444;
}
.tool.redo {
  color: #bbb;
}
.flip {
  transform: scaleX(-1);
}
.tool.text {
  gap: 3px;
  margin-right: 1px;
  color: #333;
}
.tool.text .caret {
  margin-left: 3px;
}
.titlebar > .caret {
  margin: 0 2px;
}
.titlebar > .caret.bar {
  margin-left: 0;
}
.doc-title {
  margin: 0 auto 0 432px;
  font-size: 13px;
  font-weight: normal;
}
.brand {
  font: 800 14px "Open Sans", sans-serif;
  color: #009590;
  padding-top: 4px;
  margin-right: 20px;
}
.win {
  width: 13px;
  height: 13px;
  margin-right: 4px;
}
.win.min {
  border-bottom: 2px solid #444;
  width: 9px;
  margin-right: 8px;
}
.win.max {
  border: 1px solid #333;
  border-top-width: 2px;
}
.titlebar .win.max {
  margin-right: 6px;
}
.win.close {
  margin-right: 0;
}

/* ribbon tabs */
.tabs {
  flex: none;
  height: 32px;
  display: flex;
  align-items: center;
  background: #d9d9d9;
  padding-right: 8px;
}
.tab {
  height: 32px;
  padding: 0 16px;
  font-size: 14px;
}
.tab.file {
  width: 85px;
  margin-right: 6px;
  background: #549db5;
  color: #fff;
}
.tab.active {
  background: #fdfdfd;
  color: #136a87;
}
.search {
  margin: 0 10px 0 auto;
  width: 135px;
  height: 23px;
  display: flex;
  align-items: center;
  background: #fff;
  border: 1px solid #aaa;
  padding-right: 2px;
}
.search input {
  flex: 1;
  min-width: 0;
  border: none;
  padding: 0;
  outline: none;
  background: none;
  font: inherit;
}
.search input::placeholder {
  color: #999;
}
.tool.round svg {
  width: 25px;
  height: 25px;
}
.tool.round {
  margin-right: 10px;
}
.avatar {
  width: 21px;
  height: 21px;
  margin-left: 3px;
  border-radius: 50%;
  background: #808080;
}

/* ribbon */
.ribbon {
  flex: none;
  height: 98px;
  display: flex;
  padding-top: 4px;
  border-bottom: 1px solid #d8d8d8;
}
.group {
  flex: none;
  height: 91px;
  display: flex;
  flex-direction: column;
  border-right: 1px solid #d8d8d8;
}
.body {
  display: flex;
  height: 74px;
}
.g-sketch { width: 179px; }
.g-feature { width: 384px; padding-left: 11px; }
.g-sync { width: 180px; padding-left: 5px; }
.g-std { width: 109px; }
.g-gear { width: 54px; }
.g-spring { width: 61px; }
.g-surface { width: 45px; }
.g-line { width: 95px; padding-left: 1px; }
.g-asm { width: 189px; padding-left: 10px; }
.g-measure { width: 57px; }
.big {
  width: 50px;
  display: flex;
  flex-direction: column;
  align-items: center;
}
.big.first {
  width: 60px;
}
.big.mid {
  width: 46px;
}
.big.slim {
  width: 36px;
}
.big.more {
  width: 40px;
}
.big svg {
  width: 33px;
  height: 33px;
  margin-bottom: 7px;
}
.big.more span {
  width: 39px;
  height: 36px;
  margin-bottom: 4px;
  border: 1px solid #dcdcdc;
  border-radius: 3px;
  display: flex;
  align-items: center;
  justify-content: center;
}
.big.more svg {
  width: 18px;
  height: 18px;
  margin: 0;
}
.big .caret {
  margin-top: 4px;
}
.big:disabled {
  color: #bbb;
}
.gallery {
  width: 96px;
  height: 69px;
  display: grid;
  grid-template-columns: repeat(3, 1fr);
  place-items: center;
  border: 1px solid #d3d3d3;
}
.gallery svg {
  width: 25px;
  height: 25px;
}
.scroll-col {
  flex: 1;
  display: flex;
  flex-direction: column;
  align-items: center;
  justify-content: space-between;
  padding: 10px 3px 13px 0;
}
.list {
  width: 72px;
  height: 65px;
  padding-left: 2px;
  display: flex;
  flex-direction: column;
  justify-content: space-between;
}
.list.indent {
  width: 79px;
  padding-left: 10px;
}
.g-feature .list {
  width: 70px;
}
.g-feature .list.indent {
  width: 80px;
}
.g-sync .list {
  width: 80px;
}
.g-asm .list {
  padding-left: 4px;
}
.list button {
  display: flex;
  align-items: center;
  gap: 3px;
  height: 18px;
}
.list .caret {
  margin-left: 8px;
}
.body.rows {
  flex-direction: column;
  padding: 3px 0 8px 4px;
}
.cells {
  display: flex;
  align-items: center;
  height: 32px;
}
.cells .i {
  margin: 0 3px;
}
.vr {
  width: 1px;
  height: 18px;
  margin: 0 2px;
  background: #d8d8d8;
}
.name {
  display: flex;
  align-items: center;
  height: 18px;
  color: #136a87;
  padding-right: 7px;
}
.name span {
  flex: 1;
  text-align: center;
  white-space: nowrap;
}
.g-feature .name, .g-sync .name, .g-asm .name {
  margin-left: -10px;
}
.ribbon-end {
  margin-left: auto;
  padding: 81px 6px 0 0;
}

/* selection toolbar */
.toolbar {
  flex: none;
  height: 50px;
  display: flex;
  align-items: center;
  padding-top: 1px;
  border-bottom: 1px solid #a9a9a9;
}
.menu {
  display: flex;
  align-items: center;
  padding: 0 4px;
}
.menu .caret {
  margin-left: 5px;
}
.menu.main {
  width: 93px;
  padding-left: 13px;
}
.burger {
  width: 11px;
  height: 12px;
  margin-right: 7px;
}
.select {
  position: relative;
  height: 24px;
  border: 1px solid #a8a8a8;
}
.select select {
  appearance: none;
  width: 100%;
  height: 100%;
  border: none;
  padding: 0;
  background: #fff;
  font: inherit;
  color: inherit;
}
.select::after {
  content: "";
  position: absolute;
  right: 5px;
  top: 9px;
  width: 8px;
  height: 5px;
  background: #222;
  clip-path: polygon(0 0, 100% 0, 50% 100%);
}
.select.s1 {
  width: 139px;
  margin: 0 8px 0 12px;
}
.select.s2 {
  width: 146px;
  margin-right: 6px;
}
.menus {
  width: 376px;
  display: flex;
  justify-content: space-between;
}
.strip {
  display: flex;
  align-items: center;
  gap: 2px;
}
.slot {
  width: 24px;
  height: 23px;
  display: flex;
  align-items: center;
  justify-content: center;
}
.slot.on {
  background: #cfe6ec;
  border: 1px solid #b5d5de;
}
.strip > .caret {
  margin: 0 3px 0 2px;
}
.strip > .caret.wide {
  margin: 0 4px;
}
.pair {
  display: flex;
  flex-direction: column;
}
.pair.carets {
  width: 14px;
  height: 46px;
  justify-content: space-around;
  align-items: center;
}
.pair.carets span {
  height: 4px;
}
.strip .sep {
  margin: 0 6px;
}
.caret.last {
  margin: 26px 6px 0 auto;
}

/* work area */
.work {
  flex: 1;
  min-height: 0;
  display: flex;
  border-bottom: 1px solid #999;
}
.rail {
  flex: none;
  width: 33px;
  display: flex;
  flex-direction: column;
  background: #d9d9d9;
  border-right: 1px solid #b5b5b5;
}
.rail button {
  height: 44px;
  padding-left: 6px;
  display: flex;
  align-items: center;
}
.rail svg {
  width: 25px;
  height: 25px;
}
.rail .gap {
  margin-top: 12px;
}
.rail .gear-btn {
  height: 28px;
}
.rail .gear-btn svg {
  width: 15px;
  height: 15px;
  margin-left: 2px;
}
.rail .first {
  height: 57px;
  padding-top: 20px;
}
.rail .active {
  height: 47px;
  margin: 0 -1px 0 2px;
  padding-left: 4px;
  background: #fdfdfd;
}
.navigator {
  flex: none;
  width: 624px;
  padding: 0 11px 6px 7px;
  display: flex;
  flex-direction: column;
  border-right: 1px solid #999;
}
.nav-head {
  height: 29px;
  display: flex;
  align-items: center;
  justify-content: space-between;
  padding: 2px 2px 0 4px;
}
.nav-head h2 {
  margin: 0;
  font-size: 13px;
  font-weight: normal;
}
.grid {
  flex: 1;
  min-height: 0;
  overflow: hidden;
  border: 1px solid #ddd;
  border-bottom: none;
}
table {
  width: 100%;
  table-layout: fixed;
  border-collapse: separate;
  border-spacing: 0;
  font-size: 13px;
}
.c1 { width: 226px; }
.c2 { width: 59px; }
.c3 { width: 47px; }
.c4 { width: 43px; }
.c5 { width: 39px; }
.c6 { width: 117px; }
th {
  height: 23px;
  padding: 0 0 0 6px;
  text-align: left;
  font-weight: normal;
  white-space: nowrap;
  background: #ededed;
  border-right: 1px solid #ccc;
  border-bottom: 1px solid #ccc;
}
.asc {
  display: inline-block;
  width: 10px;
  height: 6px;
  margin: 0 0 2px 17px;
  background: #222;
  clip-path: polygon(50% 0, 100% 100%, 0 100%);
}
td {
  height: 21px;
  padding: 0 0 0 4px;
  line-height: 20px;
  white-space: nowrap;
  border-right: 1px solid #e4e4e4;
  border-bottom: 1px solid #e8e8e8;
}
tbody tr:nth-child(even) {
  background: #f7f7f7;
}
td:first-child {
  padding: 0;
  border-right: 1px solid #111;
}
.focus td {
  border-bottom: 1px dotted #222;
}
.focus td:not(:first-child), .boxed {
  border-top: 1px dotted #222;
  line-height: 18px;
}
.boxed {
  border-left: 1px dotted #222;
  flex: 1;
  height: 20px;
  padding-left: 2px;
  margin-left: -2px;
}
td .i {
  width: 17px;
  height: 17px;
}
.ring {
  width: 13px;
  height: 13px;
  margin-left: 2px;
}
.root td {
  font-weight: bold;
}
.node {
  height: 20px;
  display: flex;
  align-items: center;
  gap: 2px;
  position: relative;
}
.node::before, .node::after {
  content: "";
  position: absolute;
  border: 0 dotted #aaa;
}
.node::before {
  left: 10px;
  top: -10px;
  height: 21px;
  border-left-width: 1px;
}
.node::after {
  left: 10px;
  top: 10px;
  width: 10px;
  border-top-width: 1px;
}
.node.l0 { padding-left: 7px; }
.node.l1 { padding-left: 21px; }
.node.l2 { padding-left: 42px; }
.focus .node::before {
  top: 10px;
  height: 11px;
}
.node.l2::before, .node.l2::after {
  left: 31px;
}
.minus {
  position: relative;
  z-index: 1;
  width: 9px;
  height: 9px;
  margin-right: 4px;
  border: 1px solid #bbb;
  background: #fff;
}
.minus::after {
  content: "";
  position: absolute;
  left: 1px;
  top: 3px;
  width: 5px;
  height: 1px;
  background: #222;
}
.node input {
  appearance: none;
  position: relative;
  z-index: 1;
  width: 15px;
  height: 15px;
  margin: 0;
  border: 1px solid #333;
  background: #fff;
}
.node input::after {
  content: "";
  position: absolute;
  inset: 1px;
  background: #d4213d;
  clip-path: polygon(0 50%, 20% 38%, 40% 65%, 85% 0, 100% 10%, 42% 100%);
}
.node.l2 .i {
  width: 16px;
  margin: 0 1px;
}
.filler td {
  height: 600px;
  background: repeating-linear-gradient(#fdfdfd 0 20px, #e8e8e8 20px 21px, #f7f7f7 21px 41px, #e8e8e8 41px 42px);
}
.hscroll {
  height: 17px;
  display: flex;
  align-items: center;
  background: #ececec;
  padding: 0 4px;
}
.hscroll svg {
  width: 10px;
  height: 11px;
}
.track {
  flex: 1;
  margin: 0 6px;
}
.thumb {
  width: 54%;
  height: 16px;
  background: #cacaca;
}
.splitter {
  height: 6px;
  margin: 2px 0;
  background: #d9d9d9;
  border: 1px solid #b5b5b5;
}
.fold {
  height: 25px;
  display: flex;
  align-items: center;
  justify-content: space-between;
  padding: 0 5px 0 7px;
  font-size: 14px;
  color: #136a87;
  border-bottom: 2px solid #ccc;
}
.fold svg {
  width: 12px;
  height: 10px;
}

/* graphics window */
.view {
  flex: 1;
  min-width: 0;
  display: flex;
  flex-direction: column;
}
.doc-tabs {
  height: 24px;
  display: flex;
  border-bottom: 2px solid #549db5;
}
.doc {
  display: flex;
  align-items: center;
  gap: 4px;
  width: 101px;
  padding-left: 6px;
  font-size: 13px;
}
.doc.current {
  background: #549db5;
  color: #fff;
}
.mini {
  width: 11px;
  height: 11px;
}
.canvas {
  flex: 1;
  min-height: 0;
  position: relative;
  background: linear-gradient(#b3b4b6 0%, #babcbd 12%, #c7c7c9 32%, #d3d4d5 55%, #e2e3e5 82%, #e6e7e9 100%);
}
.model {
  position: absolute;
  left: 259px;
  bottom: 101px;
  width: 480px;
  height: 480px;
}
.model .edge {
  stroke: #2e3638;
  stroke-width: 2.5px;
}
.model circle {
  vector-effect: non-scaling-stroke;
  stroke-width: 1px;
}
.model text {
  font: 38px "Open Sans", sans-serif;
}
.triad {
  position: absolute;
  left: 25px;
  bottom: 43px;
  width: 90px;
  height: 80px;
}
.triad text {
  font: 12px "Open Sans", sans-serif;
}
.status {
  flex: none;
  height: 23px;
  display: flex;
  align-items: center;
  justify-content: flex-end;
  gap: 4px;
  padding: 0 28px 2px 0;
}
.status .globe {
  margin-left: 8px;
}

/* overlays */
.notice {
  position: absolute;
  top: -4px;
  left: 984px;
  width: 366px;
  height: 66px;
  padding-top: 14px;
  border-radius: 33px;
  background: #fdfbec;
  color: #2f9a05;
  font: 20px "Noto Sans CJK SC", sans-serif;
  line-height: 20px;
  text-align: center;
}
.caption {
  position: absolute;
  left: 0;
  right: 0;
  bottom: 117px;
  margin: 0;
  text-align: center;
  font: 500 50px "Noto Sans CJK SC", sans-serif;
  line-height: 60px;
  color: #c3f4f1;
  -webkit-text-stroke: 7px #000;
  stroke-linejoin: round;
  paint-order: stroke fill;
}
.cursor {
  position: absolute;
  left: 784px;
  bottom: -6px;
  width: 13px;
  height: 20px;
}
```
